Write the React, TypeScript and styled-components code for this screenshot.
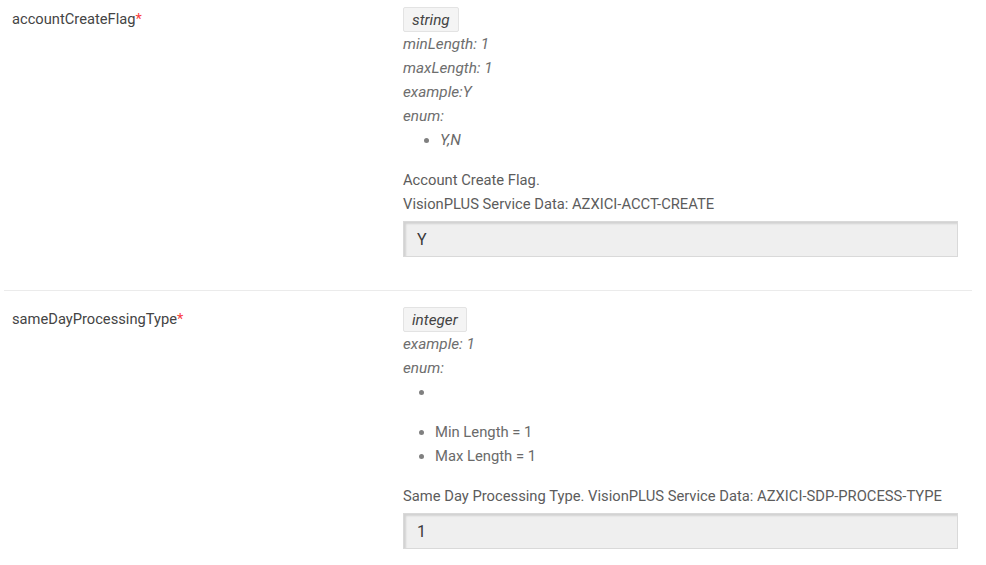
import React from "react";
import styled, { createGlobalStyle } from "styled-components";

const Global = createGlobalStyle`
  html, body { margin: 0; padding: 0; background: #fff; }
  body { font-family: Roboto, "Liberation Sans", sans-serif; }
`;

const Page = styled.div`
  padding: 0 14px 0 4px;
  width: 986px;
  box-sizing: border-box;
`;

const Row = styled.div<{ $first?: boolean }>`
  display: grid;
  grid-template-columns: 399px 1fr;
  padding-top: ${(p) => (p.$first ? "7px" : "16px")};
  border-bottom: ${(p) => (p.$first ? "1px solid #ebebeb" : "none")};
  height: ${(p) => (p.$first ? "291px" : "auto")};
  box-sizing: border-box;
`;

const Label = styled.div`
  padding: 4px 0 0 8px;
  font-size: 14.7px;
  color: #444;
  line-height: 17px;
`;

const Req = styled.span`
  color: #f93e3e;
`;

const Details = styled.div`
  display: flex;
  flex-direction: column;
`;

const Badge = styled.span`
  align-self: flex-start;
  font-style: italic;
  font-size: 15.3px;
  color: #444;
  background: #f4f4f4;
  border: 1px solid #e3e3e3;
  border-radius: 2px;
  padding: 0 8px;
  height: 25px;
  line-height: 25px;
  box-sizing: border-box;
`;

const Meta = styled.div`
  font-style: italic;
  font-size: 15.3px;
  color: #6e6e6e;
  line-height: 24px;
`;

const List = styled.ul<{ $italic?: boolean }>`
  margin: 0;
  padding-left: ${(p) => (p.$italic ? "37px" : "32px")};
  font-size: ${(p) => (p.$italic ? "15.3px" : "14.8px")};
  line-height: 24px;
  color: #6a6a6a;
  font-style: ${(p) => (p.$italic ? "italic" : "normal")};
  li::marker { color: #808080; }
`;

const Gap = styled.div<{ $h: number }>`
  height: ${(p) => p.$h}px;
`;

const Desc = styled.div`
  font-size: 14.75px;
  color: #5c5c5c;
  line-height: 24px;
  white-space: nowrap;
`;

const Input = styled.div`
  margin-top: 5px;
  width: 555px;
  height: 36px;
  box-sizing: border-box;
  background: #efefef;
  border: 1px solid #d9d9d9;
  box-shadow: inset 2px 2px 2px rgba(0, 0, 0, 0.12);
  padding: 0 13px;
  display: flex;
  align-items: center;
  font-size: 16px;
  color: #3a3a3a;
`;

export default function App() {
  return (
    <Page>
      <Global />
      <Row $first>
        <Label>
          accountCreateFlag<Req>*</Req>
        </Label>
        <Details>
          <Badge>string</Badge>
          <Meta>minLength: 1</Meta>
          <Meta>maxLength: 1</Meta>
          <Meta>example:Y</Meta>
          <Meta>enum:</Meta>
          <List $italic>
            <li>Y,N</li>
          </List>
          <Gap $h={16} />
          <Desc>Account Create Flag.</Desc>
          <Desc>VisionPLUS Service Data: AZXICI-ACCT-CREATE</Desc>
          <Input>Y</Input>
        </Details>
      </Row>
      <Row>
        <Label>
          sameDayProcessingType<Req>*</Req>
        </Label>
        <Details>
          <Badge>integer</Badge>
          <Meta>example: 1</Meta>
          <Meta>enum:</Meta>
          <List>
            <li>&nbsp;</li>
          </List>
          <Gap $h={16} />
          <List>
            <li>Min Length = 1</li>
            <li>Max Length = 1</li>
          </List>
          <Gap $h={16} />
          <Desc>Same Day Processing Type. VisionPLUS Service Data: AZXICI-SDP-PROCESS-TYPE</Desc>
          <Input>1</Input>
        </Details>
      </Row>
    </Page>
  );
}
